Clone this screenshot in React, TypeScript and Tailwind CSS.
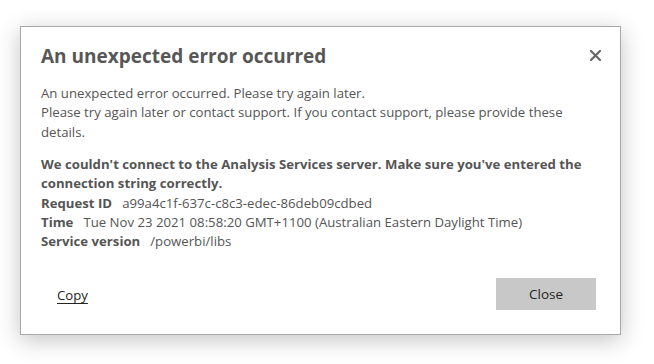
export default function App() {
  const font = { fontFamily: '"Open Sans", "Noto Sans", sans-serif' };
  return (
    <div className="w-[654px] h-[364px] bg-white pt-[26px] pl-[20px]" style={font}>
      <div className="w-[601px] h-[309px] border border-[#a8a8a8] bg-white flex flex-col px-[20px] shadow-[0_5px_22px_rgba(0,0,0,0.24)]">
        <div className="flex justify-between items-start pt-[16px]">
          <h1 className="text-[19px] leading-[26px] font-bold text-[#575757] whitespace-nowrap">
            An unexpected error occurred
          </h1>
          <button className="w-[12px] h-[12px] mt-[6px] mr-[-1px] flex items-center justify-center" aria-label="Close">
            <svg width="11" height="11" viewBox="0 0 11 11">
              <path d="M1 1 L10 10 M10 1 L1 10" stroke="#666" strokeWidth="2.2" strokeLinecap="square" />
            </svg>
          </button>
        </div>
        <div className="mt-[15px] text-[13.2px] leading-[19.4px] text-[#555555]">
          <p>An unexpected error occurred. Please try again later.</p>
          <p>Please try again later or contact support. If you contact support, please provide these details.</p>
          <div className="mt-[12.5px]">
            <p className="font-bold">
              We couldn't connect to the Analysis Services server. Make sure you've entered the connection string correctly.
            </p>
            <p>
              <span className="font-bold pr-[10px]">Request ID</span>a99a4c1f-637c-c8c3-edec-86deb09cdbed
            </p>
            <p>
              <span className="font-bold pr-[10px]">Time</span>Tue Nov 23 2021 08:58:20 GMT+1100 (Australian Eastern Daylight Time)
            </p>
            <p>
              <span className="font-bold pr-[10px]">Service version</span>/powerbi/libs
            </p>
          </div>
        </div>
        <div className="mt-auto pb-[24px] flex justify-between items-center">
          <button className="pl-[16px] pt-[4px] text-[13.2px] text-[#252423] underline underline-offset-[3px]">Copy</button>
          <button className="w-[100px] h-[32px] bg-[#c8c8c8] mr-[4px] text-[13.5px] text-[#252423]">Close</button>
        </div>
      </div>
    </div>
  );
}
